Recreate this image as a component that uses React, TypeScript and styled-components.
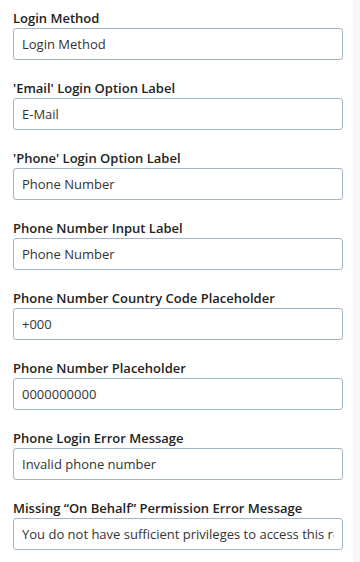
import React from "react";
import styled, { createGlobalStyle } from "styled-components";

const Global = createGlobalStyle`
  html, body { margin: 0; padding: 0; background: #ffffff; }
  body { font-family: "Open Sans", "Noto Sans", sans-serif; }
  * { box-sizing: border-box; }
`;

const Page = styled.div`
  display: grid;
  grid-template-columns: 1fr 7px;
  width: 360px;
  height: 562px;
  overflow: hidden;
`;

const Form = styled.div`
  display: flex;
  flex-direction: column;
  gap: 20px;
  padding: 10px 10px 0 13px;
  background: #ffffff;
`;

const Strip = styled.div`
  background: #f7f7f7;
`;

const Field = styled.div`
  display: flex;
  flex-direction: column;
  gap: 2px;
`;

const Label = styled.label`
  font-size: 13px;
  font-weight: 600;
  line-height: 16px;
  color: #222222;
`;

const Input = styled.input`
  width: 100%;
  height: 32px;
  padding: 0 8px;
  border: 1px solid #a3b5c9;
  border-radius: 3px;
  font-family: "Open Sans", "Noto Sans", sans-serif;
  font-size: 13px;
  color: #333333;
  background: #ffffff;
  outline: none;
`;

const fields: [string, string][] = [
  ["Login Method", "Login Method"],
  ["'Email' Login Option Label", "E-Mail"],
  ["'Phone' Login Option Label", "Phone Number"],
  ["Phone Number Input Label", "Phone Number"],
  ["Phone Number Country Code Placeholder", "+000"],
  ["Phone Number Placeholder", "0000000000"],
  ["Phone Login Error Message", "Invalid phone number"],
  [
    "Missing \u201COn Behalf\u201D Permission Error Message",
    "You do not have sufficient privileges to access this resource",
  ],
];

export default function App() {
  return (
    <>
      <Global />
      <Page>
        <Form>
          {fields.map(([label, value], i) => (
            <Field key={i}>
              <Label>{label}</Label>
              <Input defaultValue={value} readOnly />
            </Field>
          ))}
        </Form>
        <Strip />
      </Page>
    </>
  );
}
